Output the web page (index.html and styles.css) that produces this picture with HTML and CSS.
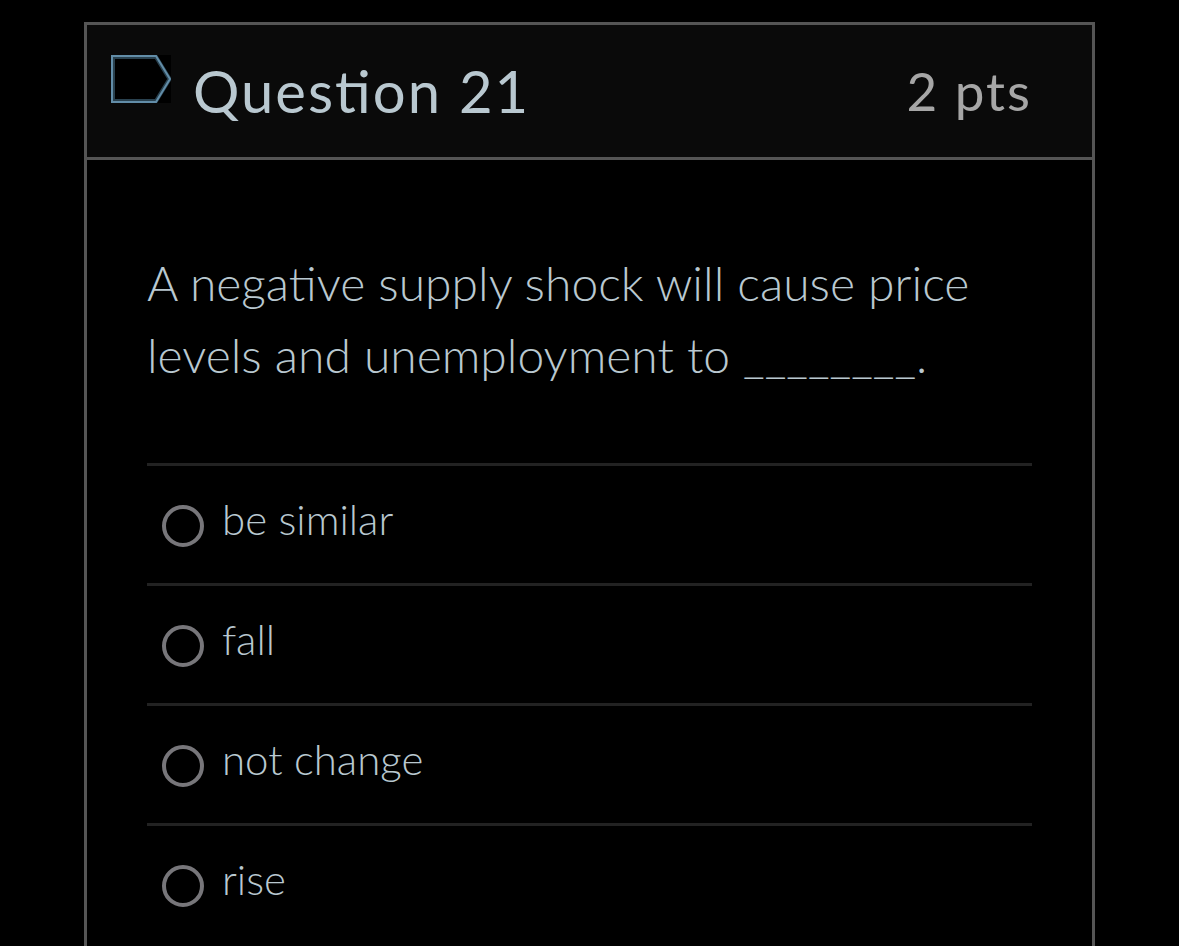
FILE: index.html
```html
<!DOCTYPE html>
<html lang="en">
<head>
<meta charset="utf-8">
<meta name="viewport" content="width=device-width, initial-scale=1">
<title>Question 21</title>
<link rel="stylesheet" href="styles.css">
</head>
<body>
<main class="question">
  <header class="question-header">
    <button class="flag" type="button" aria-label="Flag question">
      <svg class="flag-icon" viewBox="0 0 60 48" aria-hidden="true">
        <rect width="60" height="48" fill="#000"/>
        <path d="M2 2H45L58.500 24L45 46H2Z" fill="none" stroke="#29414f" stroke-width="4"/>
        <path d="M1 1H45L59 24L45 47H1Z" fill="none" stroke="#628da8" stroke-width="2"/>
      </svg>
    </button>
    <h1 class="title">Question 21</h1>
    <span class="points">2 pts</span>
  </header>
  <form class="question-body">
    <p class="prompt" id="prompt">A negative supply shock will cause price levels and unemployment to ________.</p>
    <div class="answers" role="radiogroup" aria-labelledby="prompt">
      <label class="answer"><input class="radio" type="radio" name="answer"><span class="answer-text">be similar</span></label>
      <label class="answer"><input class="radio" type="radio" name="answer"><span class="answer-text">fall</span></label>
      <label class="answer"><input class="radio" type="radio" name="answer"><span class="answer-text">not change</span></label>
      <label class="answer"><input class="radio" type="radio" name="answer"><span class="answer-text">rise</span></label>
    </div>
  </form>
</main>
</body>
</html>
```

FILE: styles.css
```css
* {
  box-sizing: border-box;
}

body {
  margin: 0;
  padding: 22px 84px 0;
  background: #000;
  color: #b9c8d0;
  font-family: Lato, sans-serif;
  font-weight: 300;
}

.question {
  min-height: calc(100vh - 22px);
  border: 3px solid #555;
  border-bottom: 0;
}

.question-header {
  display: flex;
  align-items: flex-start;
  padding: 30px 60px 30px 24px;
  border-bottom: 3px solid #555;
  background: #0a0a0a;
}

.flag {
  padding: 0;
  border: 0;
  background: none;
}

.flag-icon {
  display: block;
  width: 60px;
  height: 48px;
}

.title {
  flex: 1;
  margin: 0 0 0 22px;
  font-size: 58px;
  font-weight: 400;
  line-height: 72px;
  letter-spacing: 2px;
  font-feature-settings: "liga" 1;
}

.points {
  color: #a6a6a6;
  font-size: 53px;
  font-weight: 400;
  line-height: 72px;
  letter-spacing: 2px;
}

.question-body {
  padding: 87px 60px 0;
}

.prompt {
  margin: 0;
  font-size: 48px;
  line-height: 72px;
}

.answers {
  margin-top: 72px;
}

.answer {
  display: flex;
  align-items: flex-start;
  gap: 18px;
  min-height: 120px;
  padding: 24px 15px;
  border-top: 3px solid #222;
}

.radio {
  appearance: none;
  flex: none;
  width: 42px;
  height: 42px;
  margin: 15px 0 0;
  border: 4px solid #77767a;
  border-radius: 50%;
}

.radio:checked {
  background: #b9c8d0;
  background-clip: content-box;
  padding: 6px;
}

.answer-text {
  font-size: 42px;
  line-height: 58px;
}
```
